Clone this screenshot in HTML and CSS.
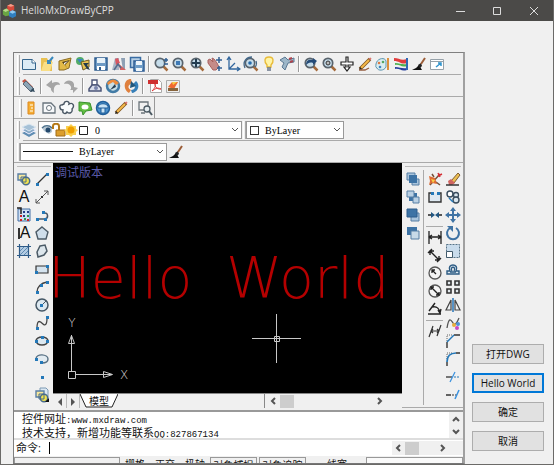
FILE: index.html
```html
<!DOCTYPE html>
<html lang="zh-CN">
<head>
  <meta charset="UTF-8">
  <meta name="viewport" content="width=device-width, initial-scale=1.0">
  <title>HelloMxDrawByCPP</title>
  <link rel="stylesheet" href="styles.css">
</head>
<body>
<!-- shared icon parts -->
<svg class="defs" width="0" height="0" aria-hidden="true">
  <symbol id="lens" viewBox="0 0 16 16"><path d="M10 10l4.500 4.500" stroke="#a56b3c" stroke-width="2.500"/><circle cx="7" cy="7" r="4.700" fill="#c5dcea" stroke="#59636c" stroke-width="1.700"/></symbol>
  <symbol id="brush" viewBox="0 0 16 16"><path d="M1 14h10l-3-5-3 3z" fill="#111"/><path d="M7 9l2 3 2-2-1-3z" fill="#222"/><path d="M10 8l4-6" stroke="#9b5c36" stroke-width="2"/></symbol>
  <symbol id="pencil" viewBox="0 0 16 16"><path d="M3 13L13 3" stroke="#80551f" stroke-width="3.500"/><path d="M4 12L12 4" stroke="#f5b94a" stroke-width="2"/><path d="M11.500 2.500l2-1 1 1-1 2z" fill="#d97870"/><path d="M2 14l1-3 2 2z" fill="#222"/></symbol>
  <symbol id="merge" viewBox="0 0 16 16"><path d="M2 3h8v6H2z" fill="#f6e79b" stroke="#5a7fa5" stroke-width="1.400"/><circle cx="10" cy="10" r="3.700" fill="#f2e34e" stroke="#496c8b" stroke-width="1.500"/><path d="M5 6h5v5H5z" fill="none" stroke="#496c8b"/></symbol>
</svg>

<header class="titlebar">
  <svg class="icon" viewBox="0 0 16 16"><path d="M6 2l4-2 4 2v5l-4 1-4-1z" fill="#d94b3b"/><path d="M6 2l4-2 4 2-4 1z" fill="#f4a08b"/><path d="M1 7l4-2 3 2v6l-4 1-3-2z" fill="#6aa543"/><path d="M1 7l4-2 3 2-4 2z" fill="#b9d98c"/><path d="M8 9l4-2 4 2v5l-4 2-4-2z" fill="#2f7fc0"/><path d="M8 9l4-2 4 2-4 2z" fill="#8fc9ee"/></svg>
  <h1>HelloMxDrawByCPP</h1>
  <button class="win-btn" aria-label="最小化"><svg viewBox="0 0 10 10"><path d="M1 5.500h9"/></svg></button>
  <button class="win-btn" aria-label="最大化"><svg viewBox="0 0 10 10"><path d="M1.500 1.500h7v7h-7z"/></svg></button>
  <button class="win-btn" aria-label="关闭"><svg viewBox="0 0 10 10"><path d="M1 1l8 8M9 1L1 9"/></svg></button>
</header>

<main class="dialog">
  <section class="cad">
    <div class="bar inset">
      <i class="grip"></i>
      <button class="tool" aria-label="新建"><svg viewBox="0 0 16 16"><path d="M1.500 3.500h10l3 3v7h-13z" fill="#dcebf5" stroke="#35658c"/><path d="M11 3v4h4" fill="#fff" stroke="#35658c"/></svg></button>
      <button class="tool" aria-label="模板"><svg viewBox="0 0 16 16"><path d="M2 2h6l1 2h4v11H2z" fill="#e9c153"/><path d="M2 15l3-9h9l-3 9z" fill="#f8de87"/><path d="M14 1l-5 6M9 4v3h3" fill="none" stroke="#3888bd" stroke-width="2"/></svg></button>
      <button class="tool" aria-label="打开"><svg viewBox="0 0 16 16"><path d="M2 14V5l4-1 8-2-2 10-5 2z" fill="#e2b947" stroke="#8b6b20"/><path d="M5 6l8-2-5 5 3 4z" fill="#4d3b17"/><path d="M7 7l4-2-4 4z" fill="#fff"/></svg></button>
      <button class="tool" aria-label="网络打开"><svg viewBox="0 0 16 16"><circle cx="5" cy="5" r="4" fill="#52ab67"/><path d="M2 3l3 4 3-4z" fill="#3a84c1"/><path d="M6 6l8-2v7l-6 3z" fill="#e8c351" stroke="#735b25"/><path d="M8 7l4 6 3 1-3-5 2-2z" fill="#263c4c"/></svg></button>
      <button class="tool" aria-label="保存"><svg viewBox="0 0 16 16"><path d="M2 2h12v12H2z" fill="#6e9ac4" stroke="#2e5c8e" stroke-width="1.500"/><path d="M4 2h8v5H4z" fill="#e7f1f8"/><path d="M4 10h8v4H4z" fill="#fff"/><path d="M6 11h2v3H6z" fill="#2e5c8e"/></svg></button>
      <button class="tool" aria-label="图纸"><svg viewBox="0 0 16 16"><path d="M1 14L4 2h4v12z" fill="#a9b4c5"/><path d="M4 3l3-1 2 5-4 2z" fill="#d85560"/><path d="M10 2h4v12h-2z" fill="#8ea0b4"/><path d="M8 8l7 6H9z" fill="#d36262"/><path d="M3 14l4-6 3 4" stroke="#52698a" stroke-width="1.500" fill="none"/></svg></button>
      <button class="tool" aria-label="另存为"><svg viewBox="0 0 16 16"><path d="M1.500 1.500h10v10h-10z" fill="#b6cfe5" stroke="#3a6da3" stroke-width="1.500"/><path d="M5 5h10v10H5z" fill="#6d9bc6" stroke="#305f95" stroke-width="1.500"/><path d="M7 5h6v4H7zM7 12h6v3H7z" fill="#eff6fb"/></svg></button>
      <i class="sep"></i>
      <button class="tool" aria-label="实时缩放"><svg viewBox="0 0 16 16"><use href="#lens"/><path d="M11 4h4M13 2v4M11 8h4" stroke="#315f91" stroke-width="1.500"/></svg></button>
      <button class="tool" aria-label="窗口缩放"><svg viewBox="0 0 16 16"><use href="#lens"/><path d="M5 5h4v4H5z" fill="#3e79b5"/></svg></button>
      <button class="tool" aria-label="全部缩放"><svg viewBox="0 0 16 16"><use href="#lens"/><path d="M7 3v8M3 7h8" stroke="#223c50" stroke-width="2"/></svg></button>
      <button class="tool" aria-label="平移"><svg viewBox="0 0 16 16"><path d="M1 4l2-1 3 3-1-4 2 1 3 4 2 4-3 3H6L1 7z" fill="#c58b88" stroke="#a8615e"/><path d="M12 1v6M9 4h6M10 12h5M12 10v5" stroke="#335f91" stroke-width="1.500"/></svg></button>
      <button class="tool" aria-label="坐标系"><svg viewBox="0 0 16 16"><path d="M4 2v11h10M4 13l6-6M2 4l2-3 2 3M12 11l3 2-3 2" fill="none" stroke="#32679e" stroke-width="1.300"/></svg></button>
      <button class="tool" aria-label="旋转视图"><svg viewBox="0 0 16 16"><use href="#lens"/><circle cx="7" cy="7" r="1.800" fill="#286bab"/><path d="M2 12C-1 5 4 1 9 1M13 5c1 3 1 4-1 6" fill="none" stroke="#45698a" stroke-width="1.300"/></svg></button>
      <button class="tool" aria-label="打开灯"><svg viewBox="0 0 16 16"><path d="M8 1c5 0 5 5 2 8v2H6V9C3 6 3 1 8 1z" fill="#fff4a6" stroke="#e8bb39" stroke-width="1.400"/><path d="M6 12h4M6 14h4" stroke="#68758b" stroke-width="1.500"/></svg></button>
      <button class="tool" aria-label="测量"><svg viewBox="0 0 16 16"><path d="M1 4l5-3 3 3 6-2v4l-6 1-3 7-3-3 2-4z" fill="#9db7c9" stroke="#5a7893"/><path d="M10 3l3-1M11 6l3-1" stroke="#b0444d" stroke-width="2"/></svg></button>
      <i class="sep"></i>
      <button class="tool" aria-label="上一视图"><svg viewBox="0 0 16 16"><use href="#lens"/><path d="M3 9c0-5 3-6 7-5V2l4 3-4 4V7C7 6 5 7 3 9z" fill="#254b78"/></svg></button>
      <button class="tool" aria-label="缩放对象"><svg viewBox="0 0 16 16"><use href="#lens"/><circle cx="7" cy="7" r="2" fill="#bbb" stroke="#333"/></svg></button>
      <button class="tool" aria-label="移动视图"><svg viewBox="0 0 16 16"><path d="M7 1h2v5h5v3H9v2h2l-3 4-3-4h2V9H2V6h5z" fill="#fff" stroke="#222" stroke-width="1.200"/></svg></button>
      <button class="tool" aria-label="编辑"><svg viewBox="0 0 16 16"><use href="#pencil"/><path d="M2 14h6l4-2" fill="none" stroke="#976044" stroke-width="1.300"/></svg></button>
      <button class="tool" aria-label="颜色"><svg viewBox="0 0 16 16"><path d="M1 8c1-6 9-7 10-3v6c-2 4-8 4-9 1-2-1-1-2-1-4z" fill="#d9edf0" stroke="#5c94ae"/><circle cx="4" cy="7" r="1.300" fill="#dc7941"/><circle cx="8" cy="6" r="1.300" fill="#56a660"/><circle cx="5" cy="11" r="1.300" fill="#3d82c0"/><path d="M13 2v12" stroke="#dc913d" stroke-width="2"/></svg></button>
      <button class="tool" aria-label="图层颜色"><svg viewBox="0 0 16 16"><path d="M1 2c5 0 7 3 13 1v4C8 9 7 5 1 5z" fill="#e03c3c"/><path d="M2 7c5 0 7 2 12 1v2C8 12 7 8 2 9z" fill="#4caf50"/><path d="M2 11c5 0 7 2 12 1v2C8 16 7 12 2 13z" fill="#253d9c"/><path d="M14 2v12" stroke="#2e67b4" stroke-width="2"/></svg></button>
      <button class="tool" aria-label="格式刷"><svg viewBox="0 0 16 16"><use href="#brush"/></svg></button>
      <button class="tool" aria-label="全屏"><svg viewBox="0 0 16 16"><path d="M1.500 3.500h13v10h-13zM2 5.500h12" fill="#fff" stroke="#96a1a9"/><path d="M7 11l5-4M9 7h3v3" stroke="#3295cd" stroke-width="1.500" fill="none"/></svg></button>
    </div>

    <div class="bar">
      <i class="grip"></i>
      <button class="tool" aria-label="删除"><svg viewBox="0 0 16 16"><path d="M1 3l3-2 8 8-3 3z" fill="#c05443"/><path d="M2 6l3-3 8 8-3 3z" fill="#8da5b5" stroke="#586776"/><path d="M9 13l5 1-2-4z" fill="#334c5f"/></svg></button>
      <i class="sep"></i>
      <button class="tool" aria-label="撤销"><svg viewBox="0 0 16 16"><path d="M1 7l6-5v3c4-2 8-1 8 2-4-1-7 1-6 8-3-2-4-4-2-7v3z" fill="#a5a5a5"/></svg></button>
      <button class="tool" aria-label="重做"><svg viewBox="0 0 16 16"><path d="M15 10l-5 5v-3h-3l1-1c1-4-3-6-7-5 1-4 8-5 10 0v3z" fill="#a5a5a5"/></svg></button>
      <i class="sep"></i>
      <button class="tool" aria-label="打印"><svg viewBox="0 0 16 16"><path d="M5 2h5v5H5z" fill="#fff" stroke="#4b5578" stroke-width="1.400"/><path d="M2 11l3-4h6l3 3v3H2z" fill="#d8ddeb" stroke="#4b5578" stroke-width="1.500"/><circle cx="9" cy="10" r="2" fill="#7985ad"/></svg></button>
      <button class="tool" aria-label="浏览网页"><svg viewBox="0 0 16 16"><circle cx="8" cy="8" r="6" fill="#c8dfe5" stroke="#427ba5" stroke-width="2.500"/><path d="M2 5c5-5 8-4 12 0l-3 2-3-3-5 3z" fill="#ec8b3c"/><path d="M5 12l5-6 1 3z" fill="#263e51"/></svg></button>
      <button class="tool" aria-label="更新"><svg viewBox="0 0 16 16"><path d="M8 1C0 1 0 12 6 15l2-3C4 10 5 7 9 5z" fill="#df803e"/><path d="M9 15c7-1 8-9 4-12l-3 3c4 3 1 6-2 6z" fill="#367fb8"/><path d="M7 10l1-7 5 5z" fill="#20577d"/></svg></button>
      <i class="sep"></i>
      <button class="tool" aria-label="PDF"><svg viewBox="0 0 16 16"><path d="M3.500 1.500h8l3 3v10h-11z" fill="#fff" stroke="#aaa"/><path d="M1 2h10v4H1z" fill="#cf3030"/><path d="M5 13c4-4 4-7 3-7s1 6 6 5c-4-2-6 0-9 2z" fill="none" stroke="#df3d3d"/></svg></button>
      <button class="tool" aria-label="图像"><svg viewBox="0 0 16 16"><path d="M1.500 2.500h13v12h-13z" fill="#eee" stroke="#aaa"/><path d="M3 9l4-5h6l-4 7z" fill="#ef6a31"/><path d="M7 4h5L8 7z" fill="#f6cb46"/><path d="M3 10h10v3H3z" fill="#87643c"/></svg></button>
    </div>

    <div class="bar">
      <div class="dock">
        <i class="grip"></i>
        <button class="tool" aria-label="标尺"><svg viewBox="0 0 16 16"><path d="M5 2h6v12H5z" fill="#f5af34" stroke="#de8920"/><path d="M7 5h3M8 8h2M7 11h3" stroke="#fff"/></svg></button>
        <button class="tool" aria-label="面积"><svg viewBox="0 0 16 16"><path d="M2 3h8l4 4v6H2z" fill="#f6f8fa" stroke="#68737c" stroke-width="1.300"/><circle cx="8" cy="8" r="2.500" fill="#fff" stroke="#68737c"/></svg></button>
        <button class="tool" aria-label="云线"><svg viewBox="0 0 16 16"><path d="M5 4c0-4 6-3 5 0 4-2 6 2 3 5 1 4-3 5-5 3-2 3-5 1-4-2-4 0-4-6-1-5z" fill="#f8fbfc" stroke="#485663" stroke-width="1.400"/></svg></button>
        <button class="tool" aria-label="批注"><svg viewBox="0 0 16 16"><path d="M2 2l11 1 2 7-6 1-3 4-1-4H2z" fill="#62bd43" stroke="#39912d"/><ellipse cx="8" cy="7" rx="3.500" ry="2.500" fill="#fff"/></svg></button>
        <button class="tool" aria-label="主页"><svg viewBox="0 0 16 16"><circle cx="8" cy="8" r="6.500" fill="#4b92ce" stroke="#205f9a" stroke-width="1.500"/><path d="M3 6c3-3 7-3 10 0v2H3zM6 8v5h4V8" fill="#c9e3f4" stroke="#205f9a"/></svg></button>
        <button class="tool" aria-label="画笔"><svg viewBox="0 0 16 16"><use href="#pencil"/></svg></button>
        <i class="sep"></i>
        <button class="tool" aria-label="查找"><svg viewBox="0 0 16 16"><path d="M2 2h9v8H2zM4 13h4" fill="none" stroke="#6b747a" stroke-width="1.300"/><circle cx="10" cy="9" r="3" fill="#e5edf0" stroke="#4b5962" stroke-width="1.300"/><path d="M12 11l3 4" stroke="#4b5962" stroke-width="2"/></svg></button>
      </div>
    </div>

    <div class="bar inset">
      <i class="grip"></i>
      <button class="tool" aria-label="图层"><svg viewBox="0 0 16 16"><path d="M1 11l7-3 7 3-7 4z" fill="#5f8db3"/><path d="M1 8l7-3 7 3-7 4z" fill="#86a9c6" stroke="#eef"/><path d="M1 5l7-3 7 3-7 4z" fill="#a6c1d7" stroke="#dbe7f0"/></svg></button>
      <div class="combo layer">
        <svg class="layer-state" viewBox="0 0 48 14"><path d="M1 5c4-4 8-3 10 0v4l-3 2-5-3z" fill="#b8c8d4"/><circle cx="7" cy="7" r="2.500" fill="#24496c"/><path d="M1 5c3-3 7-3 10 0" stroke="#4e718c" fill="none" stroke-width="1.500"/><path d="M12 6V3c0-3 6-3 6 0v4" stroke="#b57817" stroke-width="2" fill="none"/><path d="M15 7h9v6h-9z" fill="#dc9e2d" stroke="#a26d16"/><path d="M30 1l2 2 3 0 0 3 2 1-2 2v3h-3l-2 2-2-2h-3V9l-2-2 2-1V3h3z" fill="#f9d04f"/><circle cx="30" cy="7" r="3.500" fill="#f0a000"/><path d="M38.500 3.500h8v8h-8z" fill="#fff" stroke="#222"/></svg>
        <select aria-label="图层列表"><option>0</option></select>
      </div>
      <i class="grip"></i>
      <div class="combo color">
        <i class="swatch"></i>
        <select aria-label="颜色列表"><option>ByLayer</option></select>
      </div>
    </div>

    <div class="bar">
      <i class="grip"></i>
      <div class="combo ltype">
        <i class="line"></i>
        <select aria-label="线型列表"><option>ByLayer</option></select>
      </div>
      <button class="tool" aria-label="特性刷"><svg viewBox="0 0 16 16"><use href="#brush"/></svg></button>
    </div>

    <div class="work">
      <aside class="side left">
        <div class="col">
          <button class="tool" aria-label="插入块"><svg viewBox="0 0 16 16"><use href="#merge"/></svg></button>
          <button class="tool letter" aria-label="文字">A</button>
          <button class="tool" aria-label="填充"><svg viewBox="0 0 16 16"><path d="M2 2h12v12H2z" fill="#cfe0f3" stroke="#426fa5"/><path d="M4 8h2v2H4zM4 12h2v2H4z" fill="#c22"/><path d="M7 4h2v2H7zM11 4h2v2h-2zM7 8h2v2H7z" fill="#253f86"/><path d="M8 11h2v2H8zM11 8h2v2h-2z" fill="#2a9b4c"/><path d="M11 12h2v2h-2z" fill="#c22"/><path d="M1 1h4v6" stroke="#222" stroke-width="1.500" fill="none"/></svg></button>
          <button class="tool letter" aria-label="单行文字"><i class="beam"></i>A</button>
          <button class="tool" aria-label="图案填充"><svg viewBox="0 0 16 16"><path d="M3 3h10v10H3z" fill="#b4cde4"/><path d="M3.500 1v14M12.500 1v14M1 3.500h14M1 12.500h14" stroke="#2e5b88" stroke-width="1.200"/><path d="M4 8l4-4M4 12l8-8M8 12l4-4" stroke="#5f8ab2"/></svg></button>
        </div>
        <div class="col">
          <button class="tool" aria-label="直线"><svg viewBox="0 0 16 16"><path d="M3 13L13 3" stroke="#333" stroke-width="1.300"/><path d="M2 12h3v3H2zM12 2h3v3h-3z" fill="#2478b8"/></svg></button>
          <button class="tool" aria-label="构造线"><svg viewBox="0 0 16 16"><path d="M2 14L14 2M10 2h4v4M2 10v4h4" stroke="#555" fill="none"/><path d="M7 7h2v2H7z" fill="#333"/></svg></button>
          <button class="tool" aria-label="多段线"><svg viewBox="0 0 16 16"><path d="M3 12h8c4-1 3-7-1-6" stroke="#456" stroke-width="1.500" fill="none"/><path d="M2 11h3v3H2zM10 11h3v3h-3zM8 4h3v3H8z" fill="#2478b8"/></svg></button>
          <button class="tool" aria-label="正多边形"><svg viewBox="0 0 16 16"><path d="M8 2l6 5-2 7H4L2 7z" fill="#cfdeeb" stroke="#4b5a66" stroke-width="1.400"/></svg></button>
          <button class="tool" aria-label="多边形"><svg viewBox="0 0 16 16"><path d="M6 3l5-1 2 6-3 4-6 2-1-5z" fill="#dde6ec" stroke="#4b5a66" stroke-width="1.500"/></svg></button>
          <button class="tool" aria-label="矩形"><svg viewBox="0 0 16 16"><path d="M2 5h12v7H2z" fill="#d5e3ee" stroke="#333" stroke-width="1.200"/><path d="M1 10h3v3H1zM12 4h3v3h-3z" fill="#2478b8"/></svg></button>
          <button class="tool" aria-label="圆弧"><svg viewBox="0 0 16 16"><path d="M3 13c0-5 4-9 10-10" stroke="#444" fill="none" stroke-width="1.400"/><path d="M2 12h3v3H2zM6 5h3v3H6zM12 2h3v3h-3z" fill="#2478b8"/></svg></button>
          <button class="tool" aria-label="圆"><svg viewBox="0 0 16 16"><circle cx="8" cy="8" r="6" fill="#dce8f0" stroke="#445664" stroke-width="1.500"/><path d="M8 8l4-4" stroke="#445664"/><path d="M6 7h3v3H6z" fill="#2478b8"/></svg></button>
          <button class="tool" aria-label="样条曲线"><svg viewBox="0 0 16 16"><path d="M3 13c0-10 4-6 6-4s4 1 4-6" stroke="#444" fill="none" stroke-width="1.300"/><path d="M2 12h3v3H2zM12 1h3v3h-3z" fill="#2478b8"/></svg></button>
          <button class="tool" aria-label="椭圆"><svg viewBox="0 0 16 16"><ellipse cx="8" cy="8" rx="6" ry="4" fill="#dce8f0" stroke="#444" stroke-width="1.400"/><path d="M1 7h3v3H1zM12 7h3v3h-3zM7 3h3v3H7z" fill="#2478b8"/></svg></button>
          <button class="tool" aria-label="椭圆弧"><svg viewBox="0 0 16 16"><path d="M2 8c0-6 12-5 12 0 0 3-3 4-6 4" fill="#e2ebf1" stroke="#587184" stroke-width="1.400"/><path d="M1 7h3v3H1zM6 10h3v3H6z" fill="#2478b8"/></svg></button>
          <button class="tool" aria-label="点"><svg viewBox="0 0 16 16"><path d="M7 7h3v3H7z" fill="#2478b8"/></svg></button>
          <button class="tool" aria-label="创建块"><svg viewBox="0 0 16 16"><path d="M6 1h6l2 2v8H6z" fill="#dce8f2" stroke="#7d9ab4"/><use href="#merge" y="1"/><path d="M15 11v4h-4z" fill="#111"/></svg></button>
        </div>
      </aside>

      <div class="view">
        <svg class="canvas" role="img" aria-label="图形窗口">
          <text class="debug" x="2" y="14">调试版本</text>
          <text class="hello" x="-5" y="135">Hello</text>
          <text class="hello" x="173" y="135">World</text>
          <g class="ucs">
            <path d="M15.500 208.500h7v7h-7zM18.500 208v-36M23 211.500h36M15.500 180.500l3-8 3 8zM50.500 208.500l9 3-9 3z"/>
            <text x="19" y="164" text-anchor="middle">Y</text>
            <text x="71" y="216" text-anchor="middle">X</text>
          </g>
          <g class="cross">
            <path d="M199 175.500h49M223.500 151v49M221.500 173.500h5v5h-5z"/>
          </g>
        </svg>
        <div class="tabs">
          <button class="nav" aria-label="上一个"><svg viewBox="0 0 8 8"><path d="M6 0v8L2 4z" fill="#555"/></svg></button>
          <button class="nav" aria-label="下一个"><svg viewBox="0 0 8 8"><path d="M2 0v8l4-4z" fill="#555"/></svg></button>
          <button class="tab">模型</button>
          <span class="fill"></span>
          <div class="hscroll wide">
            <svg viewBox="0 0 8 8"><path d="M6 1L3 4l3 3"/></svg><i class="thumb"></i><svg class="end" viewBox="0 0 8 8"><path d="M2 1l3 3-3 3"/></svg>
          </div>
        </div>
      </div>

      <aside class="side right">
        <div class="col order">
          <button class="tool" aria-label="前置"><svg viewBox="0 0 16 16"><path d="M2 2h8v7H2zM7 8h7v6H7z" fill="#a9c4dc" stroke="#567fa4"/><path d="M4 4h8v8H4z" fill="#3d73a5"/></svg></button>
          <button class="tool" aria-label="后置"><svg viewBox="0 0 16 16"><path d="M4 4h8v8H4z" fill="#3d73a5"/><path d="M2 2h7v6H2zM8 8h6v6H8z" fill="#bad0e3" stroke="#567fa4"/></svg></button>
          <button class="tool" aria-label="置于对象之上"><svg viewBox="0 0 16 16"><path d="M6 6h8v8H6z" fill="#a9c4dc" stroke="#567fa4"/><path d="M2 2h10v8H2z" fill="#3d73a5" stroke="#2c5d8c"/></svg></button>
          <button class="tool" aria-label="置于对象之下"><svg viewBox="0 0 16 16"><path d="M2 2h10v8H2z" fill="#3d73a5"/><path d="M6 6h8v8H6z" fill="#c8dae8" stroke="#567fa4"/></svg></button>
        </div>
        <div class="col dims">
          <button class="tool" aria-label="分解"><svg viewBox="0 0 16 16"><path d="M3 14L13 3M5 3l2 3M9 11l4 3" stroke="#765037" stroke-width="1.500"/><path d="M2 5l6 2 2 6-5-1-3 2 1-4z" fill="#dd6c35"/><path d="M4 8l4 1-2 3z" fill="#f8cf45"/><path d="M11 5l4-2M11 2l2 4" stroke="#d52e34" stroke-width="1.500"/></svg></button>
          <button class="tool" aria-label="打断"><svg viewBox="0 0 16 16"><path d="M5 4H2v9h12V4h-3" stroke="#333" fill="#dfe9f1" stroke-width="1.400"/><path d="M4 3h3v3H4zM10 3h3v3h-3z" fill="#2478b8"/></svg></button>
          <button class="tool" aria-label="合并"><svg viewBox="0 0 16 16"><path d="M1 8h5M10 8h5" stroke="#222" stroke-width="1.500"/><path d="M4 5l4 3-4 3zM12 5L8 8l4 3z" fill="#225681"/></svg></button>
          <hr>
          <button class="tool" aria-label="线性标注"><svg viewBox="0 0 16 16"><path d="M2 2v13M14 2v13M2 8h12M5 6L2 8l3 2M11 6l3 2-3 2" stroke="#222" stroke-width="1.300" fill="none"/></svg></button>
          <button class="tool" aria-label="对齐标注"><svg viewBox="0 0 16 16"><path d="M1 6l4-4M10 15l4-4M3 4l9 9M3 8V4h4M12 9v4H8" stroke="#222" stroke-width="1.400" fill="none"/></svg></button>
          <button class="tool" aria-label="半径标注"><svg viewBox="0 0 16 16"><circle cx="8" cy="8" r="6" fill="#f4f4f4" stroke="#555" stroke-width="1.300"/><path d="M9 9L5 5M5 8V5h3" stroke="#222" stroke-width="1.300" fill="none"/></svg></button>
          <button class="tool" aria-label="直径标注"><svg viewBox="0 0 16 16"><circle cx="8" cy="8" r="6" fill="#f4f4f4" stroke="#555" stroke-width="1.300"/><path d="M4 4l8 8M4 7V4h3M12 9v3H9" stroke="#222" stroke-width="1.400" fill="none"/></svg></button>
          <button class="tool" aria-label="角度标注"><svg viewBox="0 0 16 16"><path d="M1 13h13M2 10L8 2M5 6c5-1 7 1 8 6M11 9l2 3 1-4" stroke="#222" stroke-width="1.400" fill="none"/></svg></button>
          <hr>
          <button class="tool" aria-label="编辑标注"><svg viewBox="0 0 16 16"><path d="M2 14L6 3M10 13l4-11M4 8h8M6 6L4 8l2 2M10 6l2 2-2 2" stroke="#333" stroke-width="1.200" fill="none"/></svg></button>
        </div>
        <div class="col">
          <button class="tool" aria-label="擦除"><svg viewBox="0 0 16 16"><path d="M6 10l7-8 2 2-6 8z" fill="#ebbf53" stroke="#805b30"/><path d="M3 10l3-2 4 4-3 2H4z" fill="#cf6561"/><path d="M1 14h13" stroke="#333" stroke-width="1.500"/></svg></button>
          <button class="tool" aria-label="复制"><svg viewBox="0 0 16 16"><circle cx="5" cy="5" r="3" fill="#fff" stroke="#384b5c" stroke-width="1.400"/><circle cx="11" cy="6" r="2.500" fill="#d9e5ed" stroke="#384b5c" stroke-width="1.300"/><circle cx="11" cy="11" r="3" fill="#d9e5ed" stroke="#384b5c" stroke-width="1.400"/><path d="M4 9l4 4" stroke="#2478b8" stroke-width="1.500"/></svg></button>
          <button class="tool" aria-label="移动"><svg viewBox="0 0 16 16"><path d="M8 2v12M2 8h12" stroke="#3f73a4" stroke-width="2"/><path d="M8 0l3 4H5zM8 16l3-4H5zM0 8l4-3v6zM16 8l-4-3v6z" fill="#3f73a4"/></svg></button>
          <button class="tool" aria-label="旋转"><svg viewBox="0 0 16 16"><path d="M5 3a6 6 0 1 0 6 0" stroke="#3f73a4" stroke-width="2" fill="none"/><path d="M2 1h6v6z" fill="#3f73a4"/></svg></button>
          <button class="tool" aria-label="缩放"><svg viewBox="0 0 16 16"><path d="M1.500 1.500h13v13h-13z" fill="#c9dcec" stroke="#567387" stroke-dasharray="2 1"/><path d="M1.500 8.500h6v6h-6z" fill="#fff" stroke="#425b6c"/></svg></button>
          <button class="tool" aria-label="偏移"><svg viewBox="0 0 16 16"><path d="M2 13h12v-3h-3c4-8-10-8-6 0H2zM5 11h6M7 10c-3-5 5-5 2 0" fill="#dce8f0" stroke="#2d5b83" stroke-width="1.400"/></svg></button>
          <button class="tool" aria-label="阵列"><svg viewBox="0 0 16 16"><path d="M2 2h4v4H2zM10 2h4v4h-4zM2 10h4v4H2zM10 10h4v4h-4z" fill="#e3e9ed" stroke="#333" stroke-width="1.600"/></svg></button>
          <button class="tool" aria-label="镜像"><svg viewBox="0 0 16 16"><path d="M6 3v10H1zM10 3v10h5z" fill="#eef1f3" stroke="#444" stroke-width="1.200"/><path d="M8 1v14" stroke="#2674b9" stroke-width="1.500"/></svg></button>
          <button class="tool" aria-label="编辑曲线"><svg viewBox="0 0 16 16"><path d="M2 13c2-12 4-8 6-5s4 0 6-5" stroke="#555" fill="none" stroke-width="1.300"/><circle cx="9" cy="10" r="2" fill="#e9ae3d"/><circle cx="13" cy="9" r="2" fill="#4c91d8"/><circle cx="12" cy="13" r="2" fill="#c84bc4"/></svg></button>
          <button class="tool" aria-label="倒角"><svg viewBox="0 0 16 16"><path d="M2 15V9M9 2h6" stroke="#333" stroke-width="1.400"/><path d="M2 8V2h6" stroke="#666" stroke-dasharray="1 1" fill="none"/><path d="M2 9l7-7" stroke="#2478b8" stroke-width="1.500"/></svg></button>
          <button class="tool" aria-label="圆角"><svg viewBox="0 0 16 16"><path d="M2 15v-4M11 2h4" stroke="#333" stroke-width="1.400"/><path d="M2 8V2h6" stroke="#666" stroke-dasharray="1 1" fill="none"/><path d="M2 11c0-6 3-9 9-9" stroke="#2478b8" stroke-width="1.700" fill="none"/></svg></button>
          <button class="tool" aria-label="修剪"><svg viewBox="0 0 16 16"><path d="M1 8h6" stroke="#333" stroke-width="1.300"/><path d="M9 8h6" stroke="#2478b8" stroke-dasharray="2 1"/><path d="M5 13l5-10" stroke="#3b92df" stroke-width="1.300"/></svg></button>
          <button class="tool" aria-label="延伸"><svg viewBox="0 0 16 16"><path d="M1 8h5" stroke="#333" stroke-width="1.500"/><path d="M7 8h5" stroke="#333" stroke-dasharray="2 1"/><path d="M10 12l4-9" stroke="#3b92df" stroke-width="1.500"/></svg></button>
        </div>
      </aside>
    </div>

    <div class="log">
      <div class="lines">
        <p>控件网址<span>:www.mxdraw.com</span></p>
        <p>技术支持，新增功能等联系<span>QQ:827867134</span></p>
      </div>
      <div class="vscroll">
        <svg viewBox="0 0 8 8"><path d="M1 6l3-3 3 3"/></svg>
        <svg viewBox="0 0 8 8"><path d="M1 2l3 3 3-3"/></svg>
      </div>
    </div>
    <div class="cmd">
      <label for="cmd">命令:</label><i class="caret"></i>
      <input id="cmd" type="text">
      <div class="hscroll">
        <svg viewBox="0 0 8 8"><path d="M6 1L3 4l3 3"/></svg><i class="thumb"></i><svg class="end" viewBox="0 0 8 8"><path d="M2 1l3 3-3 3"/></svg>
      </div>
    </div>
    <div class="status">
      <span class="coord"></span><span>栅格</span><span>正交</span><span>极轴</span><span class="on">对象捕捉</span><span class="on">对象追踪</span><span class="lw">线宽</span><span class="brand"></span>
    </div>
  </section>

  <nav class="actions">
    <button>打开DWG</button>
    <button class="default">Hello World</button>
    <button>确定</button>
    <button>取消</button>
  </nav>
</main>
</body>
</html>
```
FILE: styles.css
```css
* {
  box-sizing: border-box;
}
body {
  margin: 0;
  height: 100vh;
  display: flex;
  flex-direction: column;
  overflow: hidden;
  background: #f0f0f0;
  border: 1px solid #6b6a68;
  border-top: 0;
  font-family: "Open Sans", "Noto Sans CJK SC", sans-serif;
  font-size: 10px;
  color: #111;
}
button, input, select {
  font: inherit;
  color: inherit;
  margin: 0;
  padding: 0;
  border: 0;
  background: none;
}
.defs {
  position: absolute;
}

/* title bar */
.titlebar {
  display: flex;
  align-items: center;
  flex: none;
  height: 21px;
  padding: 0 1px;
  background: #4b4a48;
  color: #dcdcdc;
}
.titlebar .icon {
  width: 14px;
  height: 14px;
}
.titlebar h1 {
  flex: 1;
  margin: 0 0 0 5px;
  font-size: 10px;
  line-height: 12px;
  padding-bottom: 1px;
  font-weight: normal;
}
.win-btn {
  width: 37px;
  height: 21px;
  display: flex;
  align-items: center;
  justify-content: center;
}
.win-btn svg {
  width: 10px;
  height: 10px;
  fill: none;
  stroke: #dcdcdc;
}

.dialog {
  flex: 1;
  min-height: 0;
  display: flex;
  padding: 31px 9px 0 12px;
  gap: 7px;
}

/* drawing control */
.cad {
  flex: 1;
  min-width: 0;
  display: flex;
  flex-direction: column;
  border: 1px solid #808080;
  border-right: 2px solid #a0a0a0;
  border-bottom-color: #777;
}
.bar {
  display: flex;
  align-items: center;
  flex: none;
  height: 22px;
  padding-left: 3px;
  border-bottom: 1px solid #aaa;
}
.bar.inset {
  border-bottom: 0;
  background: linear-gradient(#aaa, #aaa) 9px 100% / calc(100% - 11px) 1px no-repeat;
}
.dock {
  display: flex;
  align-items: center;
  height: 21px;
  padding-left: 2px;
  border-right: 1px solid #999;
}
.grip {
  width: 3px;
  height: 18px;
  flex: none;
  border-left: 1px solid #fff;
  border-right: 1px solid #aaa;
}
.sep {
  width: 2px;
  height: 16px;
  margin: 0 2px;
  border-left: 1px solid #999;
  border-right: 1px solid #fff;
}
.tool {
  width: 18px;
  height: 18px;
  flex: none;
  display: flex;
  align-items: center;
  justify-content: center;
}
.tool svg {
  width: 16px;
  height: 16px;
}
.letter {
  font: 16px "Liberation Sans", sans-serif;
  color: #111;
}
.beam {
  width: 2px;
  height: 11px;
  background: #333;
}

/* drop-downs */
.combo {
  display: flex;
  align-items: center;
  height: 18px;
  background: #fff;
  border: 1px solid #999;
  padding-left: 2px;
}
.combo select {
  flex: 1;
  min-width: 0;
  height: 16px;
  appearance: none;
  font-family: "Liberation Serif", serif;
  color: #000;
  padding-left: 6px;
  background: url("data:image/svg+xml,%3Csvg xmlns='http://www.w3.org/2000/svg' width='8' height='6'%3E%3Cpath d='M1 1l3 3 3-3' fill='none' stroke='%23555'/%3E%3C/svg%3E") no-repeat right 2px center;
}
.combo.layer {
  width: 204px;
  margin-right: 1px;
}
.combo.color {
  width: 98px;
}
.combo.ltype {
  width: 147px;
}
.layer-state {
  width: 48px;
  height: 14px;
}
.swatch {
  width: 9px;
  height: 9px;
  margin-left: 1px;
  border: 1px solid #333;
}
.combo .line {
  width: 50px;
  height: 1px;
  background: #111;
}

/* work area */
.work {
  flex: 1;
  min-height: 0;
  display: flex;
}
.side {
  flex: none;
  display: flex;
  padding-top: 7px;
  background: linear-gradient(#bbb, #bbb) 50% 3px / calc(100% - 5px) 1px no-repeat;
}
.side.left {
  width: 39px;
  padding-left: 1px;
}
.side.right {
  width: 61px;
  padding-left: 2px;
  border-bottom: 1px solid #aaa;
}
.side.right .order {
  width: 20px;
  margin-bottom: 2px;
  border-right: 1px solid #aaa;
}
.side.right .dims {
  width: 20px;
  padding-left: 2px;
}
.dims hr {
  width: 17px;
  margin: 2px 0 1px;
  border: 0;
  border-top: 1px solid #aaa;
}
.view {
  flex: 1;
  min-width: 0;
  display: flex;
  flex-direction: column;
}
.canvas {
  flex: 1;
  width: 100%;
  min-height: 0;
  background: #000;
}
.debug {
  font: 12px "Noto Sans CJK SC", sans-serif;
  fill: #5a5aa8;
}
.hello {
  font: 200 57px "DejaVu Sans", "Inter", sans-serif;
  fill: #b40000;
}
.ucs path, .cross path {
  fill: none;
  stroke: #c8c8c8;
}
.ucs text {
  font: 200 12px "DejaVu Sans", sans-serif;
  fill: #d8d8d8;
}
.tabs {
  display: flex;
  flex: none;
  height: 15px;
  padding-left: 1px;
  border-top: 1px solid #888;
}
.nav {
  width: 13px;
  padding-top: 2px;
  border-right: 1px solid #bbb;
}
.nav svg {
  display: block;
  width: 8px;
  height: 8px;
  margin: 0 auto;
}
.tab {
  width: 38px;
  background: url("data:image/svg+xml,%3Csvg xmlns='http://www.w3.org/2000/svg' width='38' height='14'%3E%3Cpath d='M0 0l6 13h26l6-13' fill='%23fff' stroke='%23222'/%3E%3C/svg%3E") no-repeat;
  line-height: 13px;
}
.fill {
  flex: 1;
}
.hscroll {
  display: flex;
  align-items: center;
  width: 58px;
  background: #f0f0f0;
}
.hscroll.wide {
  width: 138px;
  padding-left: 2px;
  border-left: 1px solid #888;
}
.hscroll svg, .vscroll svg {
  width: 8px;
  height: 8px;
  margin: 0 2px;
  fill: none;
  stroke: #555;
  stroke-width: 2;
}
.hscroll .thumb {
  width: 14px;
  height: 13px;
  margin-left: 1px;
  background: #cdcdcd;
}
.hscroll .end {
  margin-left: auto;
}
.hscroll.wide .end {
  margin-right: 18px;
}

/* command window */
.log {
  display: flex;
  flex: none;
  height: 28px;
  margin-top: 2px;
  border-top: 2px solid #999;
  background: #fff;
}
.lines {
  flex: 1;
  padding-left: 8px;
}
.lines p {
  margin: 0;
  font-size: 11px;
  line-height: 13px;
}
.lines span {
  font: 9px "Liberation Mono", monospace;
}
.vscroll {
  width: 14px;
  display: flex;
  flex-direction: column;
  align-items: center;
  justify-content: space-around;
  background: #f0f0f0;
}
.cmd {
  display: flex;
  align-items: center;
  flex: none;
  height: 18px;
  border-top: 2px solid #ddd;
  background: #fff;
  font-size: 11px;
}
.cmd label {
  width: 35px;
  padding-left: 2px;
  line-height: 14px;
}
.caret {
  width: 1px;
  height: 12px;
  background: #000;
}
.cmd input {
  flex: 1;
  min-width: 0;
  height: 14px;
}
.cmd .hscroll {
  height: 14px;
  border-right: 14px solid #f0f0f0;
  width: 71px;
}
.status {
  display: flex;
  flex: none;
  height: 7px;
  padding-top: 1px;
  overflow: hidden;
  line-height: 14px;
}
.status span {
  flex: none;
  width: 30px;
  text-align: center;
}
.status .coord {
  width: 106px;
  height: 14px;
  border: 1px solid #999;
}
.status .on {
  width: 47px;
  height: 16px;
  margin-right: 2px;
  border: 1px solid #999;
}
.status .lw {
  width: 58px;
}
.status .brand {
  flex: 1;
  height: 16px;
  border: 1px solid #999;
  background: #fafafa;
}

/* dialog buttons */
.actions {
  flex: none;
  width: 72px;
  display: flex;
  flex-direction: column;
  justify-content: flex-end;
  gap: 9px;
  padding-bottom: 13px;
}
.actions button {
  height: 20px;
  background: #e1e1e1;
  border: 1px solid #adadad;
  line-height: 16px;
}
.actions .default {
  border: 2px solid #0078d7;
}
```
